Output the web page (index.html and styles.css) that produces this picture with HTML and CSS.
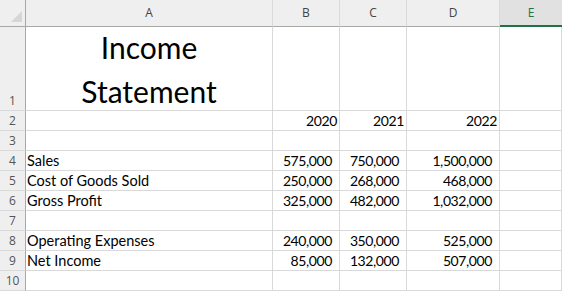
FILE: index.html
```html
<!DOCTYPE html>
<html lang="en">
<head>
    <meta charset="UTF-8">
    <title>Income Statement</title>
    <link rel="stylesheet" href="styles.css">
</head>
<body>
    <div class="sheet">
        <!-- column headers -->
        <div class="corner">
            <svg width="26" height="27" viewBox="0 0 26 27"><polygon points="22,11 22,22 11,22" fill="#d6d6d6"/></svg>
        </div>
        <div class="col-head">A</div>
        <div class="col-head">B</div>
        <div class="col-head">C</div>
        <div class="col-head">D</div>
        <div class="col-head active">E</div>

        <!-- row 1 -->
        <div class="row-head">1</div>
        <div class="cell title">Income Statement</div>
        <div class="cell"></div>
        <div class="cell"></div>
        <div class="cell"></div>
        <div class="cell"></div>

        <div class="row-head">2</div>
        <div class="cell"></div>
        <div class="cell year">2020</div>
        <div class="cell year">2021</div>
        <div class="cell year">2022</div>
        <div class="cell"></div>

        <div class="row-head">3</div>
        <div class="cell"></div>
        <div class="cell"></div>
        <div class="cell"></div>
        <div class="cell"></div>
        <div class="cell"></div>

        <div class="row-head">4</div>
        <div class="cell">Sales</div>
        <div class="cell num">575,000</div>
        <div class="cell num">750,000</div>
        <div class="cell num">1,500,000</div>
        <div class="cell"></div>

        <div class="row-head">5</div>
        <div class="cell">Cost of Goods Sold</div>
        <div class="cell num">250,000</div>
        <div class="cell num">268,000</div>
        <div class="cell num">468,000</div>
        <div class="cell"></div>

        <div class="row-head">6</div>
        <div class="cell">Gross Profit</div>
        <div class="cell num">325,000</div>
        <div class="cell num">482,000</div>
        <div class="cell num">1,032,000</div>
        <div class="cell"></div>

        <div class="row-head">7</div>
        <div class="cell"></div>
        <div class="cell"></div>
        <div class="cell"></div>
        <div class="cell"></div>
        <div class="cell"></div>

        <div class="row-head">8</div>
        <div class="cell">Operating Expenses</div>
        <div class="cell num">240,000</div>
        <div class="cell num">350,000</div>
        <div class="cell num">525,000</div>
        <div class="cell"></div>

        <div class="row-head">9</div>
        <div class="cell">Net Income</div>
        <div class="cell num">85,000</div>
        <div class="cell num">132,000</div>
        <div class="cell num">507,000</div>
        <div class="cell"></div>

        <div class="row-head">10</div>
        <div class="cell"></div>
        <div class="cell"></div>
        <div class="cell"></div>
        <div class="cell"></div>
        <div class="cell"></div>
    </div>
</body>
</html>
```

FILE: styles.css
```css
body {
    margin: 0;
    background: #fff;
    overflow: hidden;
}

.sheet {
    display: grid;
    grid-template-columns: 26px 247px 67px 67px 93px 1fr;
    grid-template-rows: 27px 84px repeat(9, 20px);
    font-family: Lato, "Liberation Sans", sans-serif;
}

.sheet > div {
    box-sizing: border-box;
}

/* header strip */
.corner {
    background: #efefef;
    border-right: 1px solid #a8a8a8;
    border-bottom: 1px solid #a8a8a8;
    line-height: 0;
}

.col-head {
    background: #efefef;
    border-right: 1px solid #dadada;
    border-bottom: 1px solid #a8a8a8;
    color: #444;
    font-family: "Open Sans", sans-serif;
    font-size: 12px;
    text-align: center;
    line-height: 26px;
}

.col-head.active {
    background: #e1e1e1;
    color: #217346;
    border-bottom: 2px solid #217346;
    border-right: none;
}

.row-head {
    background: #efefef;
    border-right: 1px solid #a8a8a8;
    border-bottom: 1px solid #dadada;
    color: #555;
    font-family: "Open Sans", sans-serif;
    font-size: 12px;
    display: flex;
    align-items: flex-end;
    justify-content: center;
    padding-bottom: 1px;
}

/* cells */
.cell {
    border-right: 1px solid #d9d9d9;
    border-bottom: 1px solid #d9d9d9;
    color: #000;
    font-size: 14.5px;
    padding: 0 2px 1px 1px;
    display: flex;
    align-items: flex-end;
    white-space: nowrap;
}

.cell.year,
.cell.num {
    justify-content: flex-end;
    font-size: 14px;
    letter-spacing: -0.4px;
}

/* comma style keeps room on the right */
.cell.num {
    padding-right: 7px;
}

.cell.title {
    font-size: 30px;
    line-height: 44px;
    white-space: normal;
    text-align: center;
    align-items: center;
    justify-content: center;
    padding: 0 40px;
}
```
